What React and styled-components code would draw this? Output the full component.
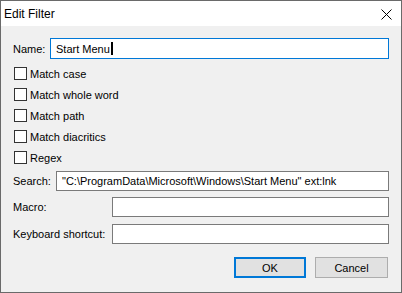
import styled, { createGlobalStyle } from 'styled-components';

const GlobalStyle = createGlobalStyle`
  html, body {
    margin: 0;
    padding: 0;
    background: #ffffff;
  }
  * {
    box-sizing: border-box;
  }
`;

const options = ['Match case', 'Match whole word', 'Match path', 'Match diacritics', 'Regex'];

const App = () => (
  <>
    <GlobalStyle />
    <Window>
      <TitleBar>
        <Title>Edit Filter</Title>
        <CloseButton>
          <svg width='11' height='11' viewBox='0 0 11 11'>
            <path d='M0.5 0.5 L10.5 10.5 M10.5 0.5 L0.5 10.5' stroke='#000' strokeWidth='1' fill='none' />
          </svg>
        </CloseButton>
      </TitleBar>
      <Body>
        <FieldRow $mt={12} $labelWidth={38}>
          <Label>Name:</Label>
          <TextBox $focused $height={21}>
            Start Menu<Caret />
          </TextBox>
        </FieldRow>
        <Checks>
          {options.map((opt) => (
            <CheckRow key={opt}>
              <CheckBox />
              <CheckLabel>{opt}</CheckLabel>
            </CheckRow>
          ))}
        </Checks>
        <FieldRow $mt={3} $labelWidth={44}>
          <Label>Search:</Label>
          <TextBox>"C:\ProgramData\Microsoft\Windows\Start Menu" ext:lnk</TextBox>
        </FieldRow>
        <FieldRow $mt={6} $labelWidth={100}>
          <Label>Macro:</Label>
          <TextBox />
        </FieldRow>
        <FieldRow $mt={7} $labelWidth={100}>
          <Label>Keyboard shortcut:</Label>
          <TextBox />
        </FieldRow>
        <Buttons>
          <Button $default>OK</Button>
          <Button>Cancel</Button>
        </Buttons>
      </Body>
    </Window>
  </>
);

export default App;

const Window = styled.div`
  width: 402px;
  height: 293px;
  border: 1px solid #6a6a6a;
  background: #f0f0f0;
  display: flex;
  flex-direction: column;
  font-family: 'Liberation Sans', Arial, sans-serif;
  font-size: 11px;
  line-height: 14px;
  color: #000;
`;

const TitleBar = styled.div`
  height: 25px;
  flex: none;
  background: #ffffff;
  display: flex;
  align-items: center;
  justify-content: space-between;
  padding-left: 3px;
`;

const Title = styled.span`
  font-size: 12px;
  padding-top: 1px;
`;

const CloseButton = styled.div`
  width: 30px;
  height: 25px;
  display: flex;
  align-items: center;
  justify-content: center;
  padding-top: 2px;
`;

const Body = styled.div`
  flex: 1;
  display: flex;
  flex-direction: column;
  padding: 0 12px 0 11px;
`;

const FieldRow = styled.div`
  display: grid;
  grid-template-columns: ${(p) => p.$labelWidth}px 1fr;
  align-items: center;
  margin-top: ${(p) => p.$mt}px;
`;

const Label = styled.span`
  padding-left: 1px;
  white-space: nowrap;
`;

const TextBox = styled.div`
  height: ${(p) => p.$height || 20}px;
  background: #ffffff;
  border: 1px solid ${(p) => (p.$focused ? '#0078d7' : '#7a7a7a')};
  display: flex;
  align-items: center;
  padding-left: 5px;
  white-space: nowrap;
  overflow: hidden;
`;

const Caret = styled.span`
  display: inline-block;
  width: 2px;
  height: 13px;
  background: #000;
  margin-left: 1px;
`;

const Checks = styled.div`
  display: flex;
  flex-direction: column;
  margin-top: 4px;
`;

const CheckRow = styled.label`
  height: 21px;
  display: flex;
  align-items: center;
  gap: 3px;
  padding-left: 2px;
  white-space: nowrap;
`;

const CheckBox = styled.span`
  width: 13px;
  height: 13px;
  flex: none;
  border: 1px solid #333333;
  background: #ffffff;
`;

const CheckLabel = styled.span``;

const Buttons = styled.div`
  display: flex;
  justify-content: flex-end;
  gap: 9px;
  margin-top: 13px;
  padding-right: 1px;
`;

const Button = styled.div`
  width: ${(p) => (p.$default ? 72 : 73)}px;
  height: 21px;
  background: #e1e1e1;
  border: ${(p) => (p.$default ? '2px solid #0078d7' : '1px solid #adadad')};
  display: flex;
  align-items: center;
  justify-content: center;
`;
